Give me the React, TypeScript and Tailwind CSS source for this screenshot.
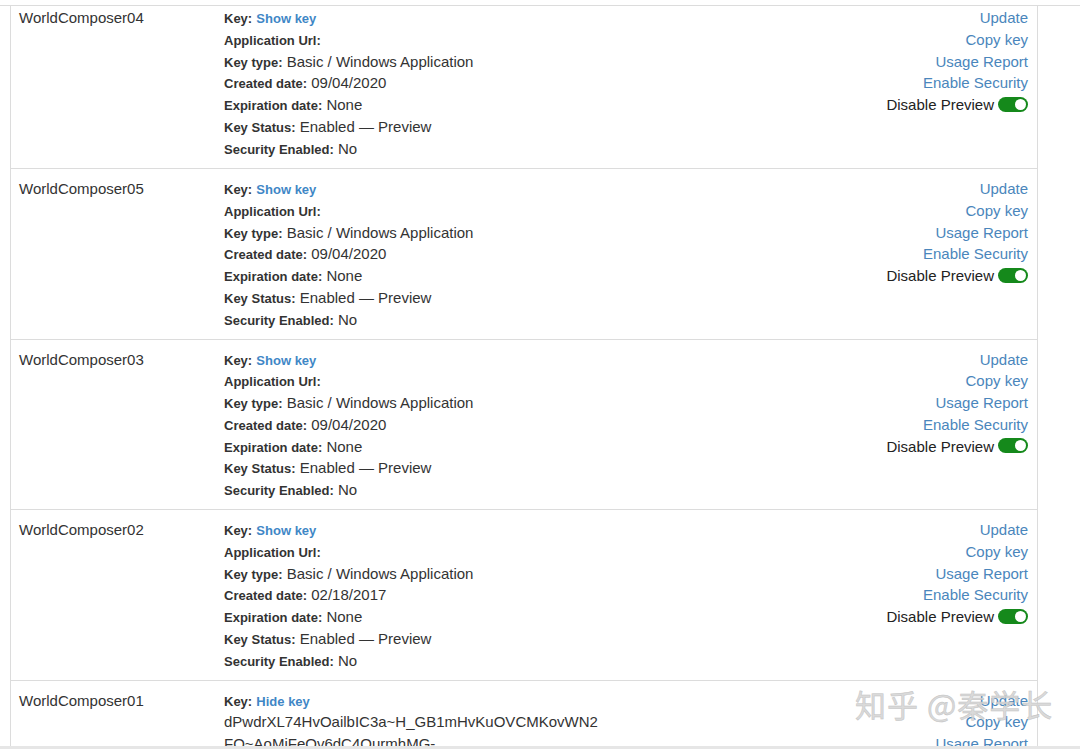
import React from "react";

type Row = {
  name: string;
  created: string;
};

const rows: Row[] = [
  { name: "WorldComposer04", created: "09/04/2020" },
  { name: "WorldComposer05", created: "09/04/2020" },
  { name: "WorldComposer03", created: "09/04/2020" },
  { name: "WorldComposer02", created: "02/18/2017" },
];

const font = { fontFamily: '"Liberation Sans", Arial, sans-serif' };

function Label({ children }: { children: React.ReactNode }) {
  return <span className="font-bold text-[13px] text-[#333]">{children}</span>;
}

function Line({ children, className = "" }: { children: React.ReactNode; className?: string }) {
  return <div className={`h-[21.8px] leading-[21.8px] whitespace-nowrap ${className}`}>{children}</div>;
}

function Toggle() {
  return (
    <span className="inline-flex items-center w-[30px] h-[15px] rounded-full bg-[#15891b] ml-[4px] relative top-[-1px] justify-end pr-[2px]">
      <span className="w-[11px] h-[11px] rounded-full bg-white" />
    </span>
  );
}

function Actions({ cut }: { cut?: boolean }) {
  return (
    <div className="flex flex-col items-end text-[15px] text-[#4a86bc]">
      <Line>Update</Line>
      <Line>Copy key</Line>
      <Line>Usage Report</Line>
      {!cut && <Line>Enable Security</Line>}
      {!cut && (
        <Line className="text-[#222] flex items-center">
          Disable Preview
          <Toggle />
        </Line>
      )}
    </div>
  );
}

function Details({ created }: { created: string }) {
  return (
    <div className="flex flex-col text-[15px] text-[#333]">
      <Line>
        <Label>Key:</Label>{" "}
        <span className="font-bold text-[13px] text-[#3f87c6]">Show key</span>
      </Line>
      <Line>
        <Label>Application Url:</Label>
      </Line>
      <Line>
        <Label>Key type:</Label> Basic / Windows Application
      </Line>
      <Line>
        <Label>Created date:</Label> {created}
      </Line>
      <Line>
        <Label>Expiration date:</Label> None
      </Line>
      <Line>
        <Label>Key Status:</Label> Enabled — Preview
      </Line>
      <Line>
        <Label>Security Enabled:</Label> No
      </Line>
    </div>
  );
}

export default function App() {
  return (
    <div className="w-[1080px] h-[749px] bg-white flex flex-col overflow-hidden relative" style={font}>
      <div className="h-[5px] shrink-0" />
      <div className="flex-1 overflow-hidden border-t border-[#dcdcdc]">
        <div className="ml-[10px] w-[1028px] border-x border-[#dcdcdc]">
          {rows.map((r, i) => (
            <div
              key={r.name}
              className={`flex border-b border-[#dcdcdc] pl-[8px] pr-[9px] ${i === 0 ? "pt-[1px] h-[163px]" : "pt-[9px] h-[170.5px]"}`}
            >
              <div className="w-[205px] shrink-0 text-[15px] text-[#333]">
                <Line>{r.name}</Line>
              </div>
              <div className="flex-1">
                <Details created={r.created} />
              </div>
              <Actions />
            </div>
          ))}
          <div className="flex pl-[8px] pr-[9px] pt-[9px] h-[120px]">
            <div className="w-[205px] shrink-0 text-[15px] text-[#333]">
              <Line>WorldComposer01</Line>
            </div>
            <div className="flex-1 flex flex-col text-[15px] text-[#333]">
              <Line>
                <Label>Key:</Label>{" "}
                <span className="font-bold text-[13px] text-[#3f87c6]">Hide key</span>
              </Line>
              <Line>dPwdrXL74HvOailbIC3a~H_GB1mHvKuOVCMKovWN2</Line>
              <Line>FQ~AoMiFeOv6dC4QurmhMG-</Line>
            </div>
            <Actions cut />
          </div>
        </div>
      </div>
      <div className="h-[3px] shrink-0 bg-[#e6e6e6]" />
      <div
        className="absolute left-[855px] top-[684px] text-[31px] leading-[40px] text-[#d6d6d6] tracking-[1px] opacity-90"
        style={{
          fontFamily: '"Noto Sans CJK SC", "Liberation Sans", sans-serif',
          WebkitTextStroke: "0.5px #bdbdbd",
        }}
      >
        知乎 @秦学长
      </div>
    </div>
  );
}
